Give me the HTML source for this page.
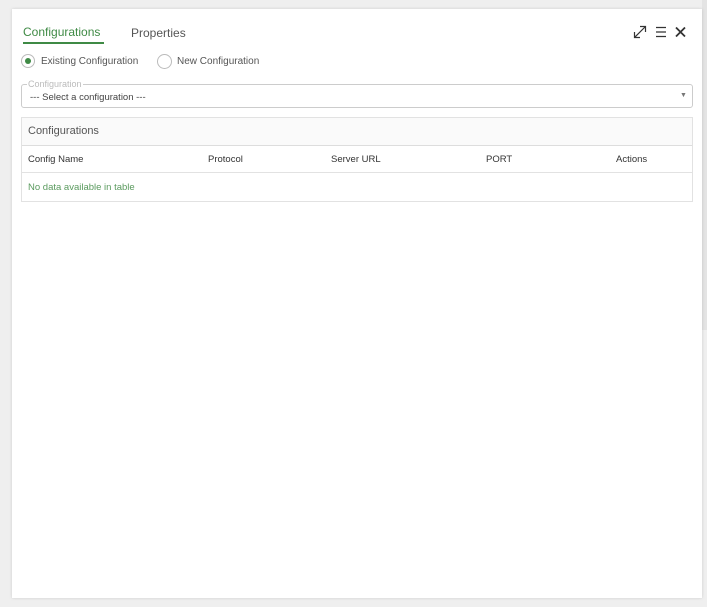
<!DOCTYPE html>
<html><head><style>
*{box-sizing:border-box;margin:0;padding:0}
body{width:707px;height:607px;background:#efefef;font-family:"Liberation Sans",sans-serif;position:relative;overflow:hidden}
.panel{position:absolute;left:12px;top:9px;width:690px;height:589px;background:#fff;box-shadow:0 0 3px rgba(0,0,0,.15)}
.t{position:absolute;font-size:11px;color:#555;white-space:nowrap}
</style></head><body>
<div style="position:absolute;left:702px;top:0;width:5px;height:330px;background:#e4e4e4"></div>
<div class="panel">
 <div class="t" style="left:11px;top:16px;font-size:12px;color:#3f8a45">Configurations</div>
 <div style="position:absolute;left:11px;top:33px;width:81px;height:2px;background:#3f8a45"></div>
 <div class="t" style="left:119px;top:17px;font-size:12px;color:#555">Properties</div>
 <svg style="position:absolute;left:621px;top:16px" width="56" height="14" viewBox="0 0 56 14">
  <g stroke="#333" stroke-width="1.2" fill="none">
   <path d="M1.5 12.5L12 2M7 1.5h5.5v5.5M1.5 7v5.5h5.5"/>
   <path d="M23 2.5h10M23 7h10M23 11.5h10"/>
   <path d="M43 2.5l9 9M52 2.5l-9 9" stroke-width="1.8"/>
  </g>
 </svg>
 <div style="position:absolute;left:9px;top:45px;width:14px;height:14px;border:1px solid #bbb;border-radius:50%"></div>
 <div style="position:absolute;left:13px;top:49px;width:6px;height:6px;background:#3f8a45;border-radius:50%"></div>
 <div class="t" style="left:29px;top:47px;font-size:10px">Existing Configuration</div>
 <div style="position:absolute;left:145px;top:45px;width:15px;height:15px;border:1px solid #bbb;border-radius:50%"></div>
 <div class="t" style="left:165px;top:47px;font-size:10px">New Configuration</div>
 <div style="position:absolute;left:9px;top:75px;width:672px;height:24px;border:1px solid #ccc;border-radius:3px"></div>
 <div class="t" style="left:15px;top:70px;font-size:9px;color:#bbb;background:#fff;padding:0 1px">Configuration</div>
 <div class="t" style="left:18px;top:83px;font-size:9.5px;color:#444">--- Select a configuration ---</div>
 <div class="t" style="left:668px;top:83px;font-size:7px;color:#777">▼</div>
 <div style="position:absolute;left:9px;top:108px;width:672px;height:85px;border:1px solid #e2e2e2">
  <div style="height:28px;background:#fafafa;border-bottom:1px solid #ddd"></div>
  <div style="height:27px;border-bottom:1px solid #e2e2e2"></div>
 </div>
 <div class="t" style="left:16px;top:116px;font-size:11px;color:#555">Configurations</div>
 <div class="t" style="left:16px;top:145px;font-size:9.5px;color:#333">Config Name</div>
 <div class="t" style="left:196px;top:145px;font-size:9.5px;color:#333">Protocol</div>
 <div class="t" style="left:319px;top:145px;font-size:9.5px;color:#333">Server URL</div>
 <div class="t" style="left:474px;top:145px;font-size:9.5px;color:#333">PORT</div>
 <div class="t" style="left:604px;top:145px;font-size:9.5px;color:#333">Actions</div>
 <div class="t" style="left:16px;top:173px;font-size:9.5px;color:#5a9a5e">No data available in table</div>
</div>
</body></html>
